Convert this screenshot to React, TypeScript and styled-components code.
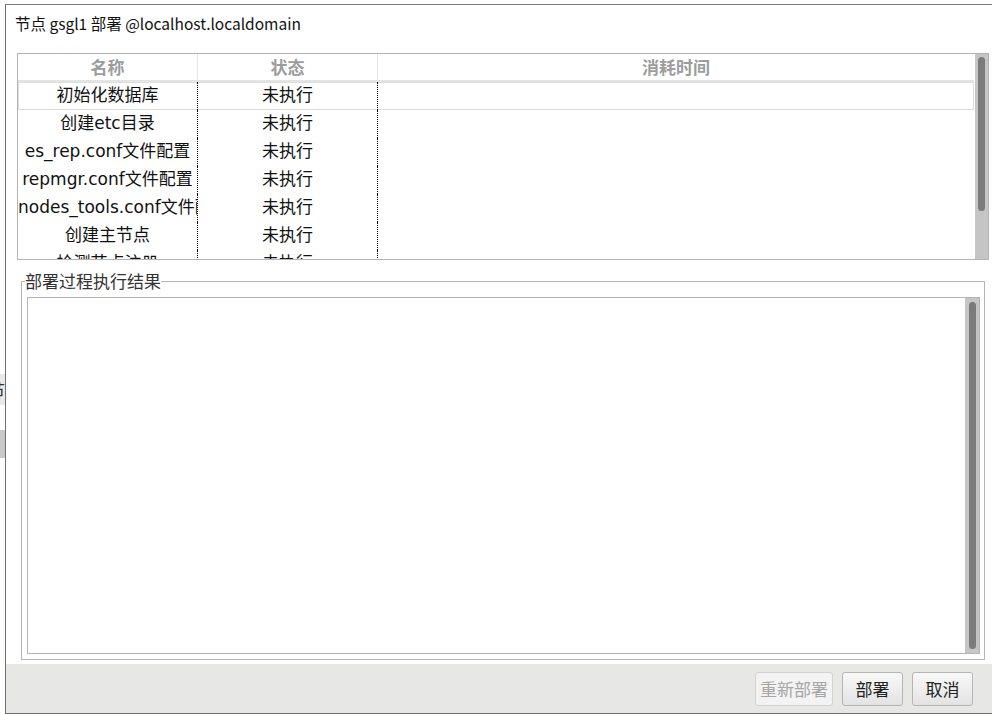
import * as React from "react";
import styled, { createGlobalStyle } from "styled-components";

const GlobalStyle = createGlobalStyle`
  html, body {
    margin: 0;
    padding: 0;
    background: #ffffff;
    font-family: "DejaVu Sans", "Noto Sans CJK SC", sans-serif;
  }
  #root {
    height: 714px;
  }
`;

const Page = styled.div`
  display: flex;
  height: 714px;
  overflow: hidden;
`;

// piece of the window lying behind the dialog
const BackStrip = styled.div`
  width: 5px;
  flex: none;
  display: flex;
  flex-direction: column;
`;

const BackTab = styled.div`
  margin-top: 374px;
  height: 31px;
  background: #e9e9e9;
  overflow: hidden;
  display: flex;
  justify-content: flex-end;
  align-items: center;
  font-family: "Noto Sans CJK SC", sans-serif;
  font-size: 17px;
  color: #333;
`;

const BackBlock = styled.div`
  margin-top: 25px;
  height: 28px;
  background: #c9c9c9;
`;

const Window = styled.div`
  flex: 1;
  margin-top: 4px;
  height: 710px;
  box-sizing: border-box;
  border-left: 1px solid #6e6e6e;
  border-top: 1px solid #7a7a7a;
  border-bottom: 1px solid #6e6e6e;
  display: flex;
  flex-direction: column;
  min-width: 0;
`;

const Content = styled.div`
  flex: 1;
  display: flex;
  flex-direction: column;
  min-height: 0;
`;

const Title = styled.div`
  height: 36px;
  padding-left: 9px;
  display: flex;
  align-items: center;
  font-family: "Noto Sans CJK SC", sans-serif;
  font-size: 15.5px;
  color: #111;
`;

const TableFrame = styled.div`
  margin: 12px 3px 0 11px;
  height: 207px;
  box-sizing: border-box;
  border: 1px solid #b4b4b4;
  display: flex;
`;

const TableView = styled.div`
  flex: 1;
  min-width: 0;
  overflow: hidden;
  margin-right: 1px;
`;

const columns = "180px 180px 1fr";

const HeaderRow = styled.div`
  display: grid;
  grid-template-columns: ${columns};
  height: 28px;
  box-sizing: border-box;
  border-bottom: 2px solid #e4e4e4;
`;

const HeaderCell = styled.div<{ $last?: boolean }>`
  box-sizing: border-box;
  border-right: ${({ $last }) => ($last ? "none" : "1px solid #e6e6e6")};
  display: flex;
  align-items: center;
  justify-content: center;
  padding-bottom: 3px;
  font-size: 17px;
  font-weight: bold;
  color: #9c9c9c;
`;

const BodyRow = styled.div<{ $selected?: boolean }>`
  display: grid;
  grid-template-columns: ${columns};
  height: 28px;
  box-shadow: ${({ $selected }) =>
    $selected ? "inset 0 0 0 1px #dedede" : "none"};
`;

const BodyCell = styled.div<{ $last?: boolean }>`
  box-sizing: border-box;
  border-right: ${({ $last }) => ($last ? "none" : "1px dotted #000")};
  line-height: 26px;
  text-align: center;
  white-space: nowrap;
  overflow: hidden;
  font-size: 17px;
  color: #111;
`;

const ScrollTrack = styled.div<{ $width: number; $pad: number }>`
  width: ${({ $width }) => $width}px;
  flex: none;
  background: #c5c5c5;
  box-sizing: border-box;
  padding: ${({ $pad }) => $pad}px 3px;
`;

const ScrollThumb = styled.div<{ $height: string }>`
  width: 7px;
  margin: 0 auto;
  height: ${({ $height }) => $height};
  border-radius: 4px;
  background: #7b7b7b;
`;

const Group = styled.fieldset`
  flex: 1;
  min-height: 0;
  min-width: 0;
  margin: 11px 7px 4px 15px;
  padding: 6px 4px 5px 5px;
  border: 1px solid #b5b5b5;
  display: flex;
  flex-direction: column;
`;

const GroupLegend = styled.legend`
  padding: 0;
  margin-left: -2px;
  line-height: 20px;
  font-family: "Noto Sans CJK SC", sans-serif;
  font-size: 17px;
  color: #333;
`;

const OutputBox = styled.div`
  flex: 1;
  border: 1px solid #b4b4b4;
  display: flex;
  justify-content: flex-end;
`;

const Footer = styled.div`
  height: 49px;
  flex: none;
  background: #e7e7e6;
  display: flex;
  justify-content: flex-end;
  align-items: center;
  gap: 9px;
  padding-right: 19px;
`;

const Button = styled.button`
  height: 34px;
  min-width: 61px;
  padding: 0 4px;
  box-sizing: border-box;
  border-radius: 3px;
  border: 1px solid #b5b5b5;
  background: linear-gradient(#f8f8f8, #e3e3e3);
  font-family: "Noto Sans CJK SC", sans-serif;
  font-size: 17px;
  color: #222;

  &:disabled {
    border-color: #d2d2d2;
    background: #f3f3f3;
    color: #a6a6a6;
  }
`;

const steps = [
  "初始化数据库",
  "创建etc目录",
  "es_rep.conf文件配置",
  "repmgr.conf文件配置",
  "nodes_tools.conf文件配置",
  "创建主节点",
  "检测节点注册",
  "启动数据库",
];

const App = () => {
  return (
    <>
      <GlobalStyle />
      <Page>
        <BackStrip>
          <BackTab>节</BackTab>
          <BackBlock />
        </BackStrip>
        <Window>
          <Content>
            <Title>节点 gsgl1 部署 @localhost.localdomain</Title>
            <TableFrame>
              <TableView>
                <HeaderRow>
                  <HeaderCell>名称</HeaderCell>
                  <HeaderCell>状态</HeaderCell>
                  <HeaderCell $last>消耗时间</HeaderCell>
                </HeaderRow>
                {steps.map((name, i) => (
                  <BodyRow key={name} $selected={i === 0}>
                    <BodyCell>{name}</BodyCell>
                    <BodyCell>未执行</BodyCell>
                    <BodyCell $last />
                  </BodyRow>
                ))}
              </TableView>
              <ScrollTrack $width={13} $pad={3}>
                <ScrollThumb $height="154px" />
              </ScrollTrack>
            </TableFrame>
            <Group>
              <GroupLegend>部署过程执行结果</GroupLegend>
              <OutputBox>
                <ScrollTrack $width={14} $pad={4}>
                  <ScrollThumb $height="100%" />
                </ScrollTrack>
              </OutputBox>
            </Group>
          </Content>
          <Footer>
            <Button disabled>重新部署</Button>
            <Button>部署</Button>
            <Button>取消</Button>
          </Footer>
        </Window>
      </Page>
    </>
  );
};

export default App;
